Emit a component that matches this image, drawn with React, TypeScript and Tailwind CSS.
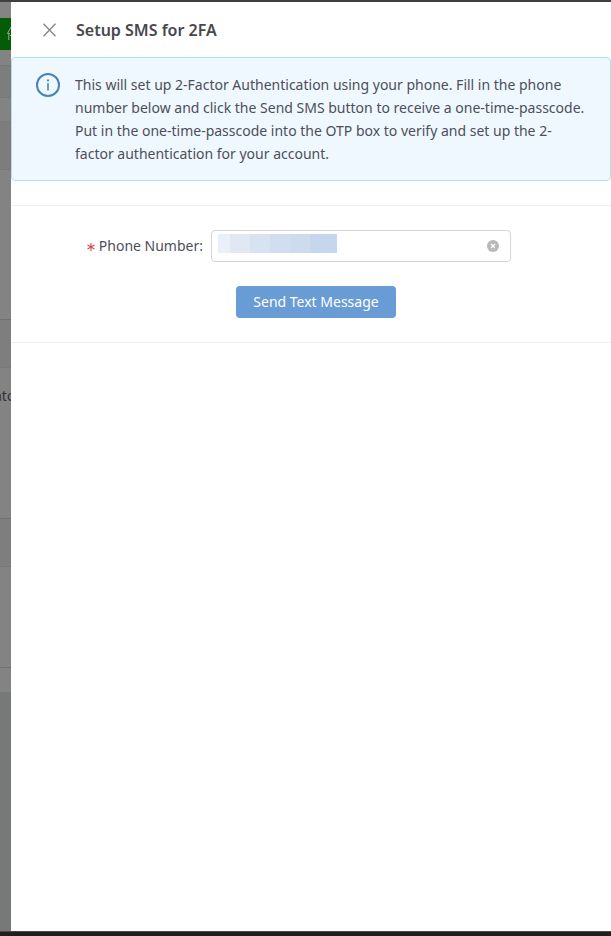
import { useState } from "react";

const rows = [
  "h-4 bg-[#858484]",
  "h-8 bg-[#045c06] flex items-center justify-end overflow-hidden",
  "h-4 bg-[#848383] border-b border-[#777777]",
  "h-8 bg-[#7d7d7d] border-b border-[#777777]",
  "h-6 bg-[#848383] border-b border-[#7a7a79]",
  "h-12 bg-[#7e7d7b] border-b border-[#777777]",
  "h-[150px] bg-[#838383] border-b border-[#707070]",
  "h-12 bg-[#7e7e7e] border-b border-[#797979]",
  "h-[151px] bg-[#838383] border-b border-[#6f6f6f]",
  "h-12 bg-[#7e7e7e] border-b border-[#777777]",
  "h-[101px] bg-[#838383] border-b border-[#707070]",
  "h-6 bg-[#838383]",
];

const blocks = [
  "w-3 bg-[#eaf0f8]",
  "w-5 bg-[#dfe8f3]",
  "w-5 bg-[#d8e3f1]",
  "w-5 bg-[#d0deef]",
  "w-5 bg-[#cddced]",
  "w-[27px] bg-[#c5d7ec]",
];

function PageBehind() {
  return (
    <div className="w-[11px] shrink-0 overflow-hidden bg-[#777978]">
      {rows.map((row, i) => (
        <div key={i} className={row}>
          {i === 1 && (
            <svg viewBox="0 0 4 14" className="h-4 w-1" fill="none" stroke="#8fae90" strokeWidth="1">
              <path d="M4 0 .5 6.5H3M1.8 6.5V13M4 8.5H2.8" />
            </svg>
          )}
          {i === 8 && <div className="-ml-1.5 pt-4 leading-6 text-[#333333]">ato</div>}
        </div>
      ))}
    </div>
  );
}

export default function App() {
  const [phone, setPhone] = useState("");
  const [masked, setMasked] = useState(true);

  function clear() {
    setPhone("");
    setMasked(false);
  }

  return (
    <div className="flex min-h-screen flex-col bg-white font-['Noto_Sans',sans-serif] text-sm text-[#4c4f5a]">
      <div className="h-0.5 bg-[#403e41]" />
      <div className="flex flex-1">
        <PageBehind />
        <main className="min-w-0 flex-1 bg-white">
          <header className="flex h-[55px] items-center gap-5 px-8">
            <button type="button" aria-label="Close" className="flex h-5 w-[13px] items-center justify-center">
              <svg viewBox="0 0 13 14" className="h-3.5 w-[13px] shrink-0" fill="none" stroke="#85858a" strokeWidth="1.3">
                <path d="M.5.8 12.5 13.2M12.5.8.5 13.2" />
              </svg>
            </button>
            <h1 className="text-base font-semibold text-[#47484e]">Setup SMS for 2FA</h1>
          </header>

          <div className="flex gap-[15px] rounded-sm border border-[#b9dcea] bg-[#f0f8ff] py-[15px] pr-6 pl-6">
            <svg viewBox="0 0 24 24" className="h-6 w-6 shrink-0" fill="none" stroke="#4583b8" strokeWidth="2">
              <circle cx="12" cy="12" r="11" />
              <path d="M12 10.2v7.3" strokeWidth="1.6" />
              <circle cx="12" cy="7.4" r="1.1" fill="#4583b8" stroke="none" />
            </svg>
            <p className="leading-[23px]">
              This will set up 2-Factor Authentication using your phone. Fill in the phone number below and click the
              Send SMS button to receive a one-time-passcode. Put in the one-time-passcode into the OTP box to verify
              and set up the 2-factor authentication for your account.
            </p>
          </div>

          <form
            onSubmit={(e) => e.preventDefault()}
            className="mt-6 border-y border-[#f1f1f1] py-6"
          >
            <div className="flex items-center">
              <label htmlFor="phone" className="flex w-50 shrink-0 items-center justify-end gap-1 pr-2">
                <svg viewBox="0 0 8 8" className="mt-0.5 h-2 w-2" stroke="#dc4450" strokeWidth="1.1">
                  <path d="M4 0v8M.5 2l7 4M7.5 2l-7 4" />
                </svg>
                Phone Number:
              </label>
              <div className="relative w-75">
                <input
                  id="phone"
                  type="tel"
                  value={phone}
                  onChange={(e) => setPhone(e.target.value)}
                  className="block h-8 w-full rounded-sm border border-[#d5d5d8] bg-white pr-8 pl-2 outline-none"
                />
                {masked && (
                  <div className="pointer-events-none absolute top-1 left-[7px] flex h-[19px]">
                    {blocks.map((block) => (
                      <span key={block} className={block} />
                    ))}
                  </div>
                )}
                <button
                  type="button"
                  aria-label="Clear"
                  onClick={clear}
                  className="absolute top-2.5 right-3 h-3 w-3"
                >
                  <svg viewBox="0 0 12 12" className="h-3 w-3">
                    <circle cx="6" cy="6" r="6" fill="#b9b9b9" />
                    <path d="m4 4 4 4M8 4 4 8" stroke="#fff" strokeWidth="1.2" />
                  </svg>
                </button>
              </div>
            </div>
            <button type="submit" className="mt-6 ml-[225px] block h-8 w-40 rounded-sm bg-[#699bd5] text-white">
              Send Text Message
            </button>
          </form>
        </main>
      </div>
      <div className="h-[5px] border-t border-[#4a4a4a] bg-[#202020]" />
    </div>
  );
}
